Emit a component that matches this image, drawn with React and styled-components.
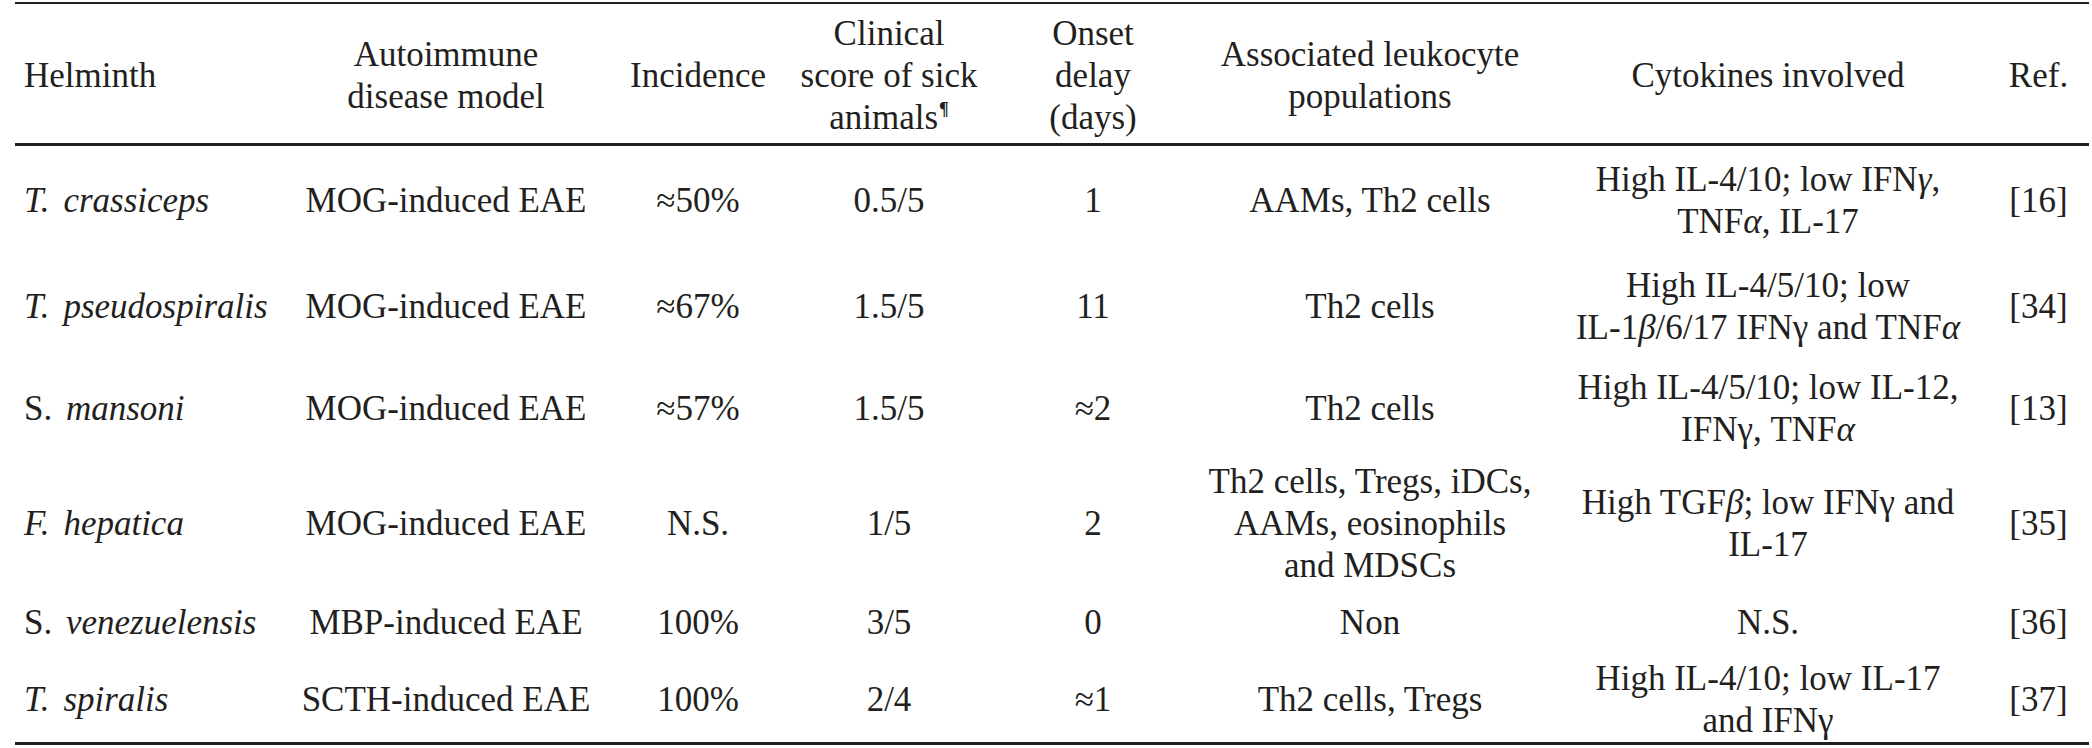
import React from "react";
import styled, { createGlobalStyle } from "styled-components";

const Global = createGlobalStyle`
  html, body { margin: 0; padding: 0; background: #ffffff; }
  body { font-family: "Liberation Serif", "Times New Roman", serif; color: #231f20; }
`;

const COLS = "265px 332px 172px 210px 198px 356px 440px 101px";

const Page = styled.div`
  padding: 2px 3px 0 15px;
`;

const Table = styled.div`
  border-top: 2px solid #231f20;
  border-bottom: 3px solid #231f20;
  font-size: 35px;
  line-height: 42px;
`;

const Row = styled.div`
  display: grid;
  grid-template-columns: ${COLS};
  height: ${(p) => p.$h}px;
  box-sizing: border-box;
  ${(p) => (p.$head ? "border-bottom: 3px solid #231f20; padding-top: 5px; height: " + (p.$h + 3) + "px;" : "")}
`;

const Cell = styled.div`
  display: flex;
  flex-direction: column;
  justify-content: center;
  align-items: ${(p) => (p.$left ? "flex-start" : "center")};
  padding-left: ${(p) => (p.$left ? "9px" : "0")};
  text-align: ${(p) => (p.$left ? "left" : "center")};
  white-space: nowrap;
  min-width: 0;
`;

const Line = styled.span`
  display: block;
`;

const Species = styled.span`
  font-style: italic;
`;

const Genus = styled.span`
  font-style: ${(p) => (p.$upright ? "normal" : "italic")};
  margin-right: 5px;
`;

const Greek = styled.span`
  font-style: ${(p) => (p.$upright ? "normal" : "italic")};
`;

const Mark = styled.sup`
  font-size: 18px;
  line-height: 0;
  vertical-align: 14px;
  margin-left: 1px;
  font-weight: bold;
`;

const header = [
  { left: true, lines: ["Helminth"] },
  { lines: ["Autoimmune", "disease model"] },
  { lines: ["Incidence"] },
  { lines: ["Clinical", "score of sick", <>animals<Mark>¶</Mark></>] },
  { lines: ["Onset", "delay", "(days)"] },
  { lines: ["Associated leukocyte", "populations"] },
  { lines: ["Cytokines involved"] },
  { lines: ["Ref."] },
];

const rows = [
  {
    h: 110,
    genus: "T.",
    species: "crassiceps",
    model: "MOG-induced EAE",
    inc: "≈50%",
    score: "0.5/5",
    onset: "1",
    leuko: ["AAMs, Th2 cells"],
    cyto: [
      <>High IL-4/10; low IFN<Greek>γ</Greek>,</>,
      <>TNF<Greek>α</Greek>, IL-17</>,
    ],
    ref: "[16]",
  },
  {
    h: 102,
    genus: "T.",
    species: "pseudospiralis",
    model: "MOG-induced EAE",
    inc: "≈67%",
    score: "1.5/5",
    onset: "11",
    leuko: ["Th2 cells"],
    cyto: [
      "High IL-4/5/10; low",
      <>IL-1<Greek>β</Greek>/6/17 IFN<Greek $upright>γ</Greek> and TNF<Greek>α</Greek></>,
    ],
    ref: "[34]",
  },
  {
    h: 102,
    genus: "S.",
    upright: true,
    species: "mansoni",
    model: "MOG-induced EAE",
    inc: "≈57%",
    score: "1.5/5",
    onset: "≈2",
    leuko: ["Th2 cells"],
    cyto: [
      "High IL-4/5/10; low IL-12,",
      <>IFN<Greek $upright>γ</Greek>, TNF<Greek>α</Greek></>,
    ],
    ref: "[13]",
  },
  {
    h: 128,
    genus: "F.",
    species: "hepatica",
    model: "MOG-induced EAE",
    inc: "N.S.",
    score: "1/5",
    onset: "2",
    leuko: ["Th2 cells, Tregs, iDCs,", "AAMs, eosinophils", "and MDSCs"],
    cyto: [
      <>High TGF<Greek>β</Greek>; low IFN<Greek $upright>γ</Greek> and</>,
      "IL-17",
    ],
    ref: "[35]",
  },
  {
    h: 70,
    genus: "S.",
    upright: true,
    species: "venezuelensis",
    model: "MBP-induced EAE",
    inc: "100%",
    score: "3/5",
    onset: "0",
    leuko: ["Non"],
    cyto: ["N.S."],
    ref: "[36]",
  },
  {
    h: 84,
    genus: "T.",
    species: "spiralis",
    model: "SCTH-induced EAE",
    inc: "100%",
    score: "2/4",
    onset: "≈1",
    leuko: ["Th2 cells, Tregs"],
    cyto: [
      "High IL-4/10; low IL-17",
      <>and IFN<Greek $upright>γ</Greek></>,
    ],
    ref: "[37]",
  },
];

const Lines = ({ items }) =>
  items.map((t, i) => <Line key={i}>{t}</Line>);

export default function App() {
  return (
    <>
      <Global />
      <Page>
        <Table>
          <Row $head $h={139}>
            {header.map((c, i) => (
              <Cell key={i} $left={c.left}>
                <Lines items={c.lines} />
              </Cell>
            ))}
          </Row>
          {rows.map((r, i) => (
            <Row key={i} $h={r.h}>
              <Cell $left>
                <Line>
                  <Genus $upright={r.upright}>{r.genus}</Genus>{" "}
                  <Species>{r.species}</Species>
                </Line>
              </Cell>
              <Cell>{r.model}</Cell>
              <Cell>{r.inc}</Cell>
              <Cell>{r.score}</Cell>
              <Cell>{r.onset}</Cell>
              <Cell>
                <Lines items={r.leuko} />
              </Cell>
              <Cell>
                <Lines items={r.cyto} />
              </Cell>
              <Cell>{r.ref}</Cell>
            </Row>
          ))}
        </Table>
      </Page>
    </>
  );
}
